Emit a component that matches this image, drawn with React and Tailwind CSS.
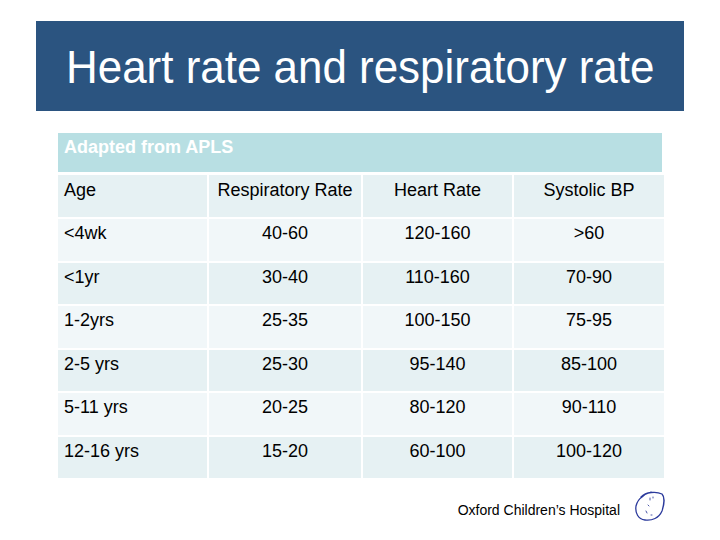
const rows = [
  ['<4wk', '40-60', '120-160', '>60'],
  ['<1yr', '30-40', '110-160', '70-90'],
  ['1-2yrs', '25-35', '100-150', '75-95'],
  ['2-5 yrs', '25-30', '95-140', '85-100'],
  ['5-11 yrs', '20-25', '80-120', '90-110'],
  ['12-16 yrs', '15-20', '60-100', '100-120'],
];

const heads = ['Age', 'Respiratory Rate', 'Heart Rate', 'Systolic BP'];

function Logo() {
  return (
    <svg width="34" height="34" viewBox="0 0 34 34" fill="none">
      <path
        d="M9 8 C14 3 24 2 30 5 C33 8 32 16 30 22 C27 29 20 32 13 31 C6 30 3 24 4 17 C5 13 7 10 10 8 C12 6 16 4 19 3"
        stroke="#2b3a9c"
        strokeWidth="1.3"
        strokeLinecap="round"
      />
      <path d="M18 9 L18 11 M21 8 L21 9 M16 16 L17 17 M14 22 L15 24 M19 26 L20 26" stroke="#4a56a8" strokeWidth="1" strokeLinecap="round" />
    </svg>
  );
}

export default function App() {
  return (
    <div className="w-[720px] h-[540px] bg-white [font-family:'Liberation_Sans',Arial,sans-serif] pt-[21px]">
      <div className="ml-[36px] w-[648px] h-[90px] bg-[#2b5480] pl-[30px] pt-[16px]">
        <h1 className="text-white text-[46px] leading-[60px] whitespace-nowrap scale-x-[0.955] origin-left">
          Heart rate and respiratory rate
        </h1>
      </div>

      <div className="ml-[58px] mt-[22px] w-[604px] flex flex-col gap-[2px]">
        <div className="h-[39px] bg-[#b8dfe3] px-[6px] pt-[4px] text-white font-bold text-[18px] leading-[20px]">
          Adapted from APLS
        </div>
        <div className="grid grid-cols-[149px_152px_149px_150px] gap-[2px] mt-[1px]">
          {heads.map((h, i) => (
            <div
              key={h}
              className={`h-[42px] bg-[#e6f1f3] pt-[5px] text-black text-[18px] leading-[20px] ${i === 0 ? 'pl-[6px]' : 'text-center'}`}
            >
              {h}
            </div>
          ))}
        </div>
        {rows.map((r, ri) => (
          <div key={ri} className="grid grid-cols-[149px_152px_149px_150px] gap-[2px]">
            {r.map((c, ci) => (
              <div
                key={ci}
                className={`h-[41.5px] pt-[4px] text-black text-[18px] leading-[20px] ${ri % 2 === 0 ? 'bg-[#f1f7f9]' : 'bg-[#e6f1f3]'} ${ci === 0 ? 'pl-[6px]' : 'text-center'}`}
              >
                {c}
              </div>
            ))}
          </div>
        ))}
      </div>

      <div className="flex items-center justify-end mr-[54px] mt-[11px] gap-[12px]">
        <span className="text-[14px] text-black leading-[16px] pt-[8px]">Oxford Children&#8217;s Hospital</span>
        <Logo />
      </div>
    </div>
  );
}
